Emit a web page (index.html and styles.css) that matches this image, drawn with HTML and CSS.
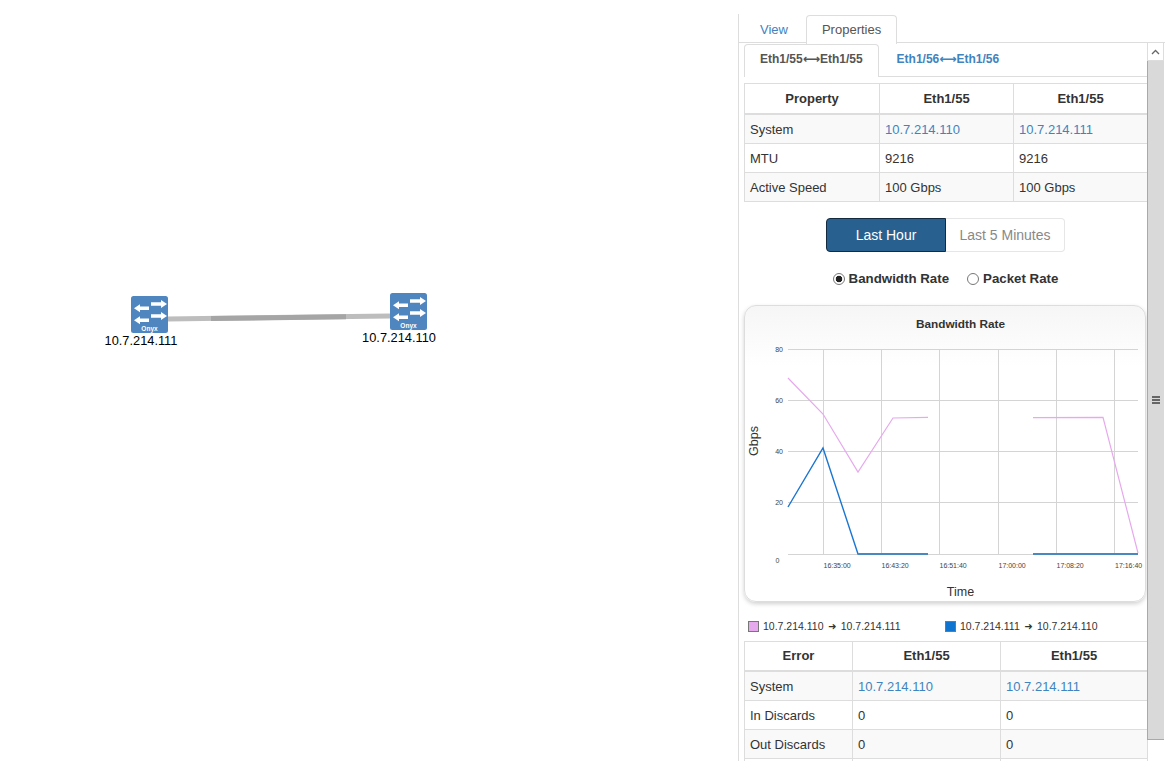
FILE: index.html
```html
<!DOCTYPE html>
<html lang="en">
<head>
<meta charset="utf-8">
<title>Link properties</title>
<link rel="stylesheet" href="styles.css">
</head>
<body>
<div class="app">
  <main class="canvas">
    <svg class="link" width="738" height="761" viewBox="0 0 738 761" aria-hidden="true">
      <line class="link-base" x1="168" y1="319" x2="390" y2="316"/>
      <line class="link-mid" x1="211" y1="318.5" x2="346" y2="316.7"/>
    </svg>
    <div class="node node-a">
      <svg class="switch" width="37" height="37" viewBox="0 0 37 37">
        <rect class="switch-body" width="37" height="37" rx="2.5"/>
        <path class="switch-arrow" d="M3 12.3 9 8.3V10.6H18V14H9V16.3ZM36 8 30 4V6.3H20V9.7H30V12ZM3 24.2 9 20.2V22.5H18V25.9H9V28.2ZM36 20 30 16V18.3H20V21.7H30V24Z"/>
        <text class="switch-text" x="18.5" y="34.5">Onyx</text>
      </svg>
      <span class="node-label">10.7.214.111</span>
    </div>
    <div class="node node-b">
      <svg class="switch" width="37" height="37" viewBox="0 0 37 37">
        <rect class="switch-body" width="37" height="37" rx="2.5"/>
        <path class="switch-arrow" d="M3 12.3 9 8.3V10.6H18V14H9V16.3ZM36 8 30 4V6.3H20V9.7H30V12ZM3 24.2 9 20.2V22.5H18V25.9H9V28.2ZM36 20 30 16V18.3H20V21.7H30V24Z"/>
        <text class="switch-text" x="18.5" y="34.5">Onyx</text>
      </svg>
      <span class="node-label">10.7.214.110</span>
    </div>
  </main>

  <aside class="panel">
    <nav class="tabs">
      <a class="tab" href="#">View</a>
      <a class="tab tab-active" href="#">Properties</a>
    </nav>
    <div class="panel-body">
      <div class="scroll-content">
        <nav class="subtabs">
          <a class="subtab subtab-active" href="#">Eth1/55<span class="dbl-arrow">⟷</span>Eth1/55</a>
          <a class="subtab" href="#">Eth1/56<span class="dbl-arrow">⟷</span>Eth1/56</a>
        </nav>

        <table class="grid grid-props">
          <colgroup><col class="c135"><col class="c134"><col class="c134"></colgroup>
          <thead><tr><th>Property</th><th>Eth1/55</th><th>Eth1/55</th></tr></thead>
          <tbody>
            <tr><td>System</td><td><a href="#">10.7.214.110</a></td><td><a href="#">10.7.214.111</a></td></tr>
            <tr><td>MTU</td><td>9216</td><td>9216</td></tr>
            <tr><td>Active Speed</td><td>100 Gbps</td><td>100 Gbps</td></tr>
          </tbody>
        </table>

        <div class="btn-group">
          <button class="btn btn-on" type="button">Last Hour</button>
          <button class="btn" type="button">Last 5 Minutes</button>
        </div>

        <div class="radios">
          <label class="radio"><input type="radio" name="rate" checked>Bandwidth Rate</label>
          <label class="radio"><input type="radio" name="rate">Packet Rate</label>
        </div>

        <section class="chart-card">
          <svg class="chart" width="402" height="297" viewBox="0 0 402 297">
            <text class="chart-title" x="216.5" y="23">Bandwidth Rate</text>
            <g class="grid-lines">
              <path d="M44 44.5H394M44 95.5H394M44 146.5H394M44 197.5H394M44 249.5H394"/>
              <path d="M79.5 44V250M137.5 44V250M195.5 44V250M254.5 44V250M312.5 44V250M370.5 44V250"/>
            </g>
            <g class="tick tick-y">
              <text x="39" y="46.5">80</text>
              <text x="39" y="97.5">60</text>
              <text x="39" y="148.5">40</text>
              <text x="39" y="199.5">20</text>
              <text x="35.5" y="257.5">0</text>
            </g>
            <g class="tick tick-x">
              <text x="79.5" y="262.5">16:35:00</text>
              <text x="137.5" y="262.5">16:43:20</text>
              <text x="195.5" y="262.5">16:51:40</text>
              <text x="254.5" y="262.5">17:00:00</text>
              <text x="312.5" y="262.5">17:08:20</text>
              <text x="371" y="262.5">17:16:40</text>
            </g>
            <text class="axis-title" x="216.5" y="291">Time</text>
            <text class="axis-title" transform="translate(14 136) rotate(-90)">Gbps</text>
            <polyline class="series-pink" points="44,73 79,109 114,167 149,113 184,112.4"/>
            <polyline class="series-pink" points="289,112.7 359,112.3 394,248"/>
            <polyline class="series-blue" points="44,202 79,143 114,249 184,249"/>
            <polyline class="series-blue" points="289,249 394,249"/>
            <path class="series-base" d="M114 249H184M289 249H394"/>
          </svg>
        </section>

        <div class="legend">
          <span class="legend-item"><i class="swatch swatch-pink"></i><span>10.7.214.110 <b class="legend-arrow">➜</b> 10.7.214.111</span></span>
          <span class="legend-item"><i class="swatch swatch-blue"></i><span>10.7.214.111 <b class="legend-arrow">➜</b> 10.7.214.110</span></span>
        </div>

        <table class="grid grid-errors">
          <colgroup><col class="c108"><col class="c148"><col class="c147"></colgroup>
          <thead><tr><th>Error</th><th>Eth1/55</th><th>Eth1/55</th></tr></thead>
          <tbody>
            <tr><td>System</td><td><a href="#">10.7.214.110</a></td><td><a href="#">10.7.214.111</a></td></tr>
            <tr><td>In Discards</td><td>0</td><td>0</td></tr>
            <tr><td>Out Discards</td><td>0</td><td>0</td></tr>
            <tr><td>&nbsp;</td><td>&nbsp;</td><td>&nbsp;</td></tr>
          </tbody>
        </table>
      </div>

      <div class="scrollbar">
        <div class="scroll-btn">
          <svg width="9" height="6" viewBox="0 0 9 6"><path class="scroll-chevron" d="M1 5 4.5 1.5 8 5"/></svg>
        </div>
        <div class="scroll-thumb"><span class="scroll-grip"></span></div>
      </div>
    </div>
  </aside>
</div>
</body>
</html>
```

FILE: styles.css
```css
* { box-sizing: border-box; }

html, body {
  margin: 0;
  height: 761px;
  overflow: hidden;
  background: #fff;
}

body {
  font-family: "Liberation Sans", Arial, sans-serif;
  font-size: 13px;
  line-height: 20px;
  color: #333;
}

a { color: #3f83bf; text-decoration: none; }

.app { display: flex; height: 761px; }

/* Topology canvas */
.canvas { position: relative; flex: 0 0 738px; height: 761px; }
.link { position: absolute; left: 0; top: 0; }
.link-base { stroke: #bdbdbd; stroke-width: 5; }
.link-mid { stroke: #a5a5a5; stroke-width: 5; }

.node {
  position: absolute;
  width: 74px;
  display: flex;
  flex-direction: column;
}
.node-a { left: 104px; top: 296px; }
.node-b { left: 362px; top: 293px; }
.node-a .switch { display: block; margin-left: 27px; }
.node-b .switch { display: block; margin-left: 28px; }
.node-label {
  color: #000;
  font-size: 12.8px;
  line-height: 15px;
  text-align: center;
  white-space: nowrap;
}
.switch-body { fill: #4f86bf; }
.switch-arrow { fill: #fff; }
.switch-text {
  fill: #fff;
  font-size: 6.5px;
  font-weight: bold;
  text-anchor: middle;
}

/* Right panel */
.panel {
  flex: 1;
  min-width: 0;
  height: 747px;
  margin-top: 14px;
  border-left: 1px solid #ddd;
  display: flex;
  flex-direction: column;
}

.tabs {
  display: flex;
  gap: 2px;
  height: 29px;
  padding: 1px 0 0 5px;
  border-bottom: 1px solid #ddd;
}
.tab {
  display: block;
  height: 28px;
  padding: 4px 15px;
  border: 1px solid transparent;
  border-bottom: 0;
  border-radius: 4px 4px 0 0;
  line-height: 19px;
}
.tab-active {
  margin-bottom: -1px;
  height: 29px;
  border-color: #ddd;
  background: #fff;
  color: #555;
}

.panel-body {
  flex: 1;
  min-height: 0;
  display: flex;
  padding-left: 5px;
}
.scroll-content { flex: 0 0 403px; min-width: 0; }

/* Sub tabs */
.subtabs {
  display: flex;
  height: 34px;
  padding-top: 1px;
  border-bottom: 1px solid #ddd;
  font-size: 12px;
  font-weight: bold;
}
.subtab {
  display: block;
  height: 32px;
  margin-right: 2px;
  padding: 4px 15px;
  border: 1px solid transparent;
  border-bottom: 0;
  border-radius: 4px 4px 0 0;
  line-height: 20px;
  white-space: nowrap;
}
.subtab-active {
  height: 33px;
  border-color: #ddd;
  background: #fff;
  color: #555;
}
.dbl-arrow { font-family: "DejaVu Sans", sans-serif; font-weight: bold; font-size: 12px; }

/* Tables */
.grid {
  width: 403px;
  table-layout: fixed;
  border-collapse: collapse;
  background: #fff;
}
.grid-props { margin-top: 6px; }
.grid-errors { margin-top: 5px; }
.grid th, .grid td {
  border: 1px solid #ddd;
  line-height: 20px;
  text-align: left;
  font-weight: normal;
  white-space: nowrap;
}
.grid td { padding: 5px 5px 3px; }
.grid th {
  border-bottom-width: 2px;
  text-align: center;
  font-weight: bold;
}
.grid-props th { padding: 5px 5px 4px; }
.grid-errors th { padding: 4px; }
.grid tbody tr:nth-child(odd) { background: #f9f9f9; }
.c135 { width: 135px; }
.c134 { width: 134px; }
.c108 { width: 108px; }
.c148 { width: 148px; }
.c147 { width: 147px; }

/* Range buttons */
.btn-group {
  display: flex;
  justify-content: center;
  margin-top: 16px;
}
.btn {
  width: 119px;
  height: 34px;
  margin: 0;
  padding: 0;
  font: 14px/20px "Liberation Sans", Arial, sans-serif;
  color: #888;
  background: #fff;
  border: 1px solid #e6e6e6;
  border-left: 0;
  border-radius: 0 4px 4px 0;
}
.btn-on {
  width: 120px;
  color: #fff;
  background: #286090;
  border: 1px solid #122b40;
  border-radius: 4px 0 0 4px;
}

/* Radios */
.radios {
  display: flex;
  justify-content: center;
  gap: 18px;
  margin-top: 17px;
  font-size: 13.3px;
  font-weight: bold;
}
.radio { display: flex; align-items: center; height: 20px; }
.radio input {
  appearance: none;
  width: 12px;
  height: 12px;
  margin: 0 4px 0 0;
  border: 1px solid #777;
  border-radius: 50%;
  background: #fff;
}
.radio input:checked {
  background: radial-gradient(circle, #222 0 3px, #fff 3.6px);
}

/* Chart */
.chart-card {
  width: 402px;
  height: 297px;
  margin-top: 16px;
  border: 1px solid #ddd;
  border-radius: 12px;
  background: linear-gradient(#f6f6f6, #fff 60px);
  box-shadow: 0 2px 4px rgba(0, 0, 0, .18);
  overflow: hidden;
}
.chart { display: block; margin: -1px 0 0 -1px; }
.chart-title {
  font-size: 11.8px;
  font-weight: bold;
  fill: #333;
  text-anchor: middle;
}
.grid-lines path { fill: none; stroke: #d4d4d4; stroke-width: 1; }
.tick text { font-size: 7px; fill: #444; }
.tick-y text { text-anchor: end; }
.axis-title { font-size: 12.5px; fill: #333; text-anchor: middle; }
.series-pink, .series-blue, .series-base { fill: none; }
.series-pink { stroke: #e7a9ee; stroke-width: 1.2; }
.series-blue { stroke: #1b76d2; stroke-width: 1.4; }
.series-base { stroke: #4a88c2; stroke-width: 2; }

/* Legend */
.legend {
  display: flex;
  height: 20px;
  margin-top: 14px;
  padding-left: 4px;
  font-size: 10.5px;
  line-height: 20px;
}
.legend-item {
  display: flex;
  align-items: center;
  gap: 4px;
  white-space: pre;
}
.legend-item:first-child { width: 197px; }
.legend-arrow {
  margin: 0 1.5px;
  font-family: "DejaVu Sans", sans-serif;
  font-weight: bold;
  font-size: 10px;
}
.swatch {
  width: 11px;
  height: 11px;
  border: 1px solid #777;
}
.swatch-pink { background: #e7a9ee; }
.swatch-blue { background: #0f74d0; }

/* Scrollbar */
.scrollbar { flex: 0 0 17px; display: flex; flex-direction: column; }
.scroll-btn {
  height: 18px;
  display: flex;
  align-items: center;
  justify-content: center;
  background: #fff;
  border: 1px solid #ddd;
  border-top: 0;
}
.scroll-chevron { fill: none; stroke: #666; stroke-width: 1.3; }
.scroll-thumb {
  height: 679px;
  display: flex;
  align-items: center;
  justify-content: center;
  background: #d9d9d9;
  border-left: 1px solid #a9a9a9;
  border-bottom: 1px solid #a9a9a9;
}
.scroll-grip {
  width: 8px;
  height: 8px;
  border-top: 2px solid #666;
  border-bottom: 2px solid #666;
  background: linear-gradient(#d9d9d9 0 1px, #666 1px 3px, #d9d9d9 3px);
}
```
